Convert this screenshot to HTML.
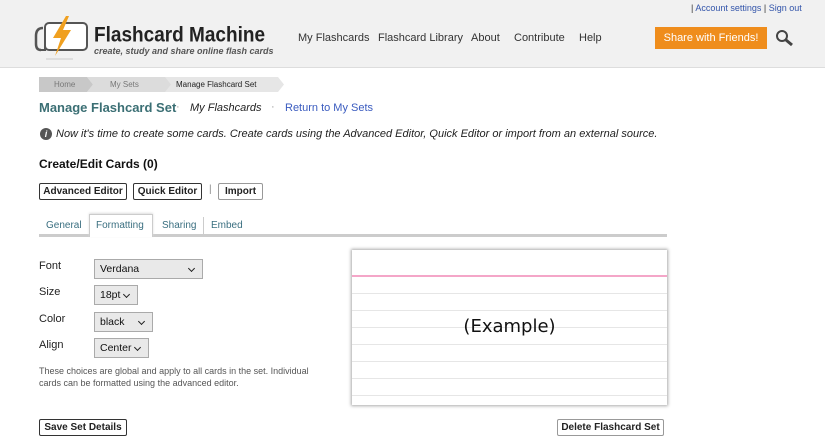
<!DOCTYPE html>
<html><head><meta charset="utf-8"><style>
*{box-sizing:border-box;margin:0;padding:0}
body{width:825px;height:446px;overflow:hidden;background:#fff;font-family:"Liberation Sans",sans-serif;position:relative;color:#222}
.a{position:absolute;white-space:nowrap}
#hdr{position:absolute;left:0;top:0;width:825px;height:68px;background:#f1f1f1;border-bottom:1px solid #ddd}
.nav{font-size:11px;color:#333;top:32px}
.btn{position:absolute;white-space:nowrap;text-align:center;border:1px solid #333;border-radius:2px;background:#fff;font-weight:bold;font-size:10px;height:17px;line-height:15px;padding:0;color:#222}
.lab{font-size:11px;color:#222}
.sel{position:absolute;white-space:nowrap;left:94px;height:20px;border:1px solid #aaa;background:#e9e9e9;font-size:10.5px;line-height:18px;padding-left:5px;color:#111}
.sel:after{content:"";position:absolute;right:8px;top:6px;width:4px;height:4px;border-right:1.3px solid #222;border-bottom:1.3px solid #222;transform:rotate(45deg)}
.tab{position:absolute;top:218px;height:18px;font-size:10px;color:#3a6f80;line-height:16px}
.ln{position:absolute;left:0;right:0;height:1px;background:#e6e6e6}
</style></head><body>
<div id="hdr"></div>
<svg class="a" style="left:33px;top:14px" width="60" height="50" viewBox="0 0 60 50">
<path d="M10 14 Q3 14 3 22 L3 30 Q3 36 8 36" fill="none" stroke="#555" stroke-width="2.5"/>
<path d="M8 36 L12 36 L12 14" fill="none" stroke="#555" stroke-width="2"/>
<rect x="12" y="9" width="42" height="27" rx="4" fill="#fff" stroke="#555" stroke-width="2"/>
<path d="M33 2 L20 24 L28 24 L22 42 L38 16 L30 16 L36 2 Z" fill="#f0a020"/>
<path d="M13 45 L40 45" stroke="#ccc" stroke-width="1"/>
</svg>
<div class="a" style="left:94px;top:24px;font-size:19px;font-weight:bold;color:#222;transform:scaleY(1.1);transform-origin:left top">Flashcard Machine</div>
<div class="a" style="left:94px;top:46px;font-size:9px;font-style:italic;font-weight:bold;color:#555">create, study and share online flash cards</div>
<div class="a nav" style="left:298px">My Flashcards</div>
<div class="a nav" style="left:378px">Flashcard Library</div>
<div class="a nav" style="left:471px">About</div>
<div class="a nav" style="left:514px">Contribute</div>
<div class="a nav" style="left:579px">Help</div>
<div class="a" style="left:655px;top:27px;width:112px;height:22px;background:#ef8d1c;color:#fff;font-size:11px;line-height:22px;text-align:center">Share with Friends!</div>
<svg class="a" style="left:775px;top:29px" width="20" height="18"><circle cx="7" cy="7" r="5" fill="none" stroke="#444" stroke-width="2"/><path d="M11 11 L17 16" stroke="#444" stroke-width="3"/></svg>
<div class="a" style="left:691px;top:3px;font-size:9px;color:#3355aa"><span style="color:#333">|</span> Account settings <span style="color:#333">|</span> Sign out</div>
<svg class="a" style="left:39px;top:77px" width="246" height="15">
<polygon points="120,0 239,0 245,7.5 239,15 120,15 126,7.5" fill="#e6e6e6"/>
<polygon points="48,0 126,0 132,7.5 126,15 48,15 54,7.5" fill="#dcdcdc"/>
<polygon points="0,0 48,0 54,7.5 48,15 0,15" fill="#c8c8c8"/>
</svg>
<div class="a" style="left:54px;top:80px;font-size:8px;color:#777">Home</div>
<div class="a" style="left:110px;top:80px;font-size:8px;color:#777">My Sets</div>
<div class="a" style="left:176px;top:80px;font-size:8px;color:#222">Manage Flashcard Set</div>
<div class="a" style="left:39px;top:100px;font-size:13px;font-weight:bold;color:#3b6f74">Manage Flashcard Set</div>
<div class="a" style="left:176px;top:101px;font-size:11px;color:#999">·</div>
<div class="a" style="left:190px;top:102px;font-size:11px;font-style:italic;color:#222">My Flashcards</div>
<div class="a" style="left:271px;top:101px;font-size:11px;color:#999">·</div>
<div class="a" style="left:285px;top:102px;font-size:11px;color:#3a5bbf">Return to My Sets</div>
<div class="a" style="left:40px;top:128px;width:12px;height:12px;border-radius:50%;background:#555;color:#fff;font-size:9px;font-weight:bold;text-align:center;line-height:12px;font-style:italic">i</div>
<div class="a" style="left:56px;top:128px;font-size:11px;font-style:italic;color:#222">Now it's time to create some cards. Create cards using the Advanced Editor, Quick Editor or import from an external source.</div>
<div class="a" style="left:39px;top:157px;font-size:12px;font-weight:bold;color:#111">Create/Edit Cards (0)</div>
<div class="btn" style="left:39px;top:183px;width:88px">Advanced Editor</div>
<div class="btn" style="left:133px;top:183px;width:69px">Quick Editor</div>
<div class="a" style="left:209px;top:184px;font-size:10px;color:#888">|</div>
<div class="btn" style="left:218px;top:183px;width:45px;border-color:#999">Import</div>
<div class="a" style="left:39px;top:234px;width:628px;height:3px;background:#ccc"></div>
<div class="tab" style="left:46px">General</div>
<div class="a" style="left:89px;top:214px;width:64px;height:23px;background:#fff;border:1px solid #ccc;border-bottom:none;box-shadow:0 -1px 2px #ddd"></div>
<div class="tab" style="left:96px">Formatting</div>
<div class="tab" style="left:162px">Sharing</div>
<div class="a" style="left:203px;top:217px;width:1px;height:17px;background:#ccc"></div>
<div class="tab" style="left:211px">Embed</div>
<div class="a lab" style="left:39px;top:260px">Font</div>
<div class="a lab" style="left:39px;top:286px">Size</div>
<div class="a lab" style="left:39px;top:313px">Color</div>
<div class="a lab" style="left:39px;top:339px">Align</div>
<div class="sel" style="top:259px;width:109px">Verdana</div>
<div class="sel" style="top:285px;width:44px">18pt</div>
<div class="sel" style="top:312px;width:59px">black</div>
<div class="sel" style="top:338px;width:55px">Center</div>
<div class="a" style="left:39px;top:365px;font-size:9px;color:#555;line-height:12px">These choices are global and apply to all cards in the set. Individual<br>cards can be formatted using the advanced editor.</div>
<div class="a" style="left:352px;top:250px;width:315px;height:155px;background:#fff;box-shadow:0 0 3px 1px #aaa;overflow:hidden">
<div class="ln" style="top:25px;height:2px;background:#f4a6c8"></div>
<div class="ln" style="top:43px"></div><div class="ln" style="top:60px"></div><div class="ln" style="top:77px"></div><div class="ln" style="top:94px"></div><div class="ln" style="top:111px"></div><div class="ln" style="top:128px"></div><div class="ln" style="top:145px"></div>
<div class="a" style="left:0;width:315px;text-align:center;top:66px;font-family:'DejaVu Sans',sans-serif;font-size:18px;color:#111">(Example)</div>
</div>
<div class="btn" style="left:39px;top:419px;width:88px">Save Set Details</div>
<div class="btn" style="left:557px;top:419px;width:107px;border-color:#999">Delete Flashcard Set</div>
</body></html>
